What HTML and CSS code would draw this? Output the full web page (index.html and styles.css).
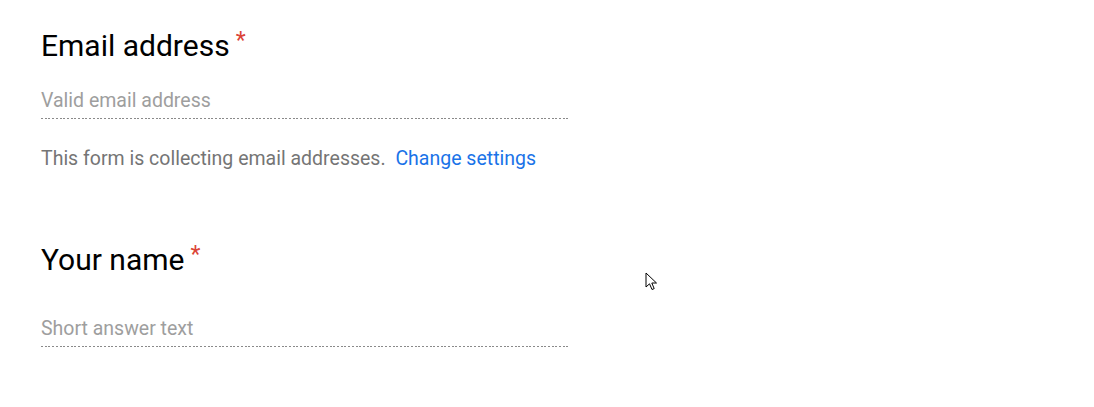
FILE: index.html
```html
<!DOCTYPE html>
<html lang="en">
<head>
    <meta charset="UTF-8">
    <title>Form questions</title>
    <link rel="stylesheet" href="styles.css">
</head>
<body>

<section class="form">
    <div class="question">
        <div class="title">Email address<span class="required">*</span></div>
        <div class="answer">Valid email address</div>
        <p class="helper">This form is collecting email addresses. <a href="#">Change settings</a></p>
    </div>

    <div class="question second">
        <div class="title">Your name<span class="required">*</span></div>
        <div class="answer">Short answer text</div>
    </div>
</section>

<svg class="cursor" width="14" height="20" viewBox="0 0 14 20">
    <path d="M1 1 L1 15 L4.5 11.8 L7 17.5 L9.2 16.6 L6.8 11 L11.5 11 Z" fill="#fff" stroke="#000" stroke-width="1" stroke-linejoin="miter"/>
</svg>

</body>
</html>
```

FILE: styles.css
```css
body {
    font-family: Roboto, Arial, sans-serif;
    background-color: #fff;
    color: #202124;
    margin: 0;
    padding: 0;
}

.form {
    padding: 28px 0 0 41px;
    width: 528px;
}

.title {
    font-size: 30px;
    line-height: 36px;
    color: #000;
}

.required {
    color: #db4437;
    font-size: 23px;
    margin-left: 6px;
    vertical-align: top;
    line-height: 26px;
}

.answer {
    margin-top: 25px;
    font-size: 19.5px;
    line-height: 24px;
    height: 24px;
    padding-bottom: 6px;
    color: #9e9e9e;
    background-image: repeating-linear-gradient(to right, #8a8a8a 0 2px, transparent 2px 3.7px);
    background-size: 100% 1px;
    background-position: left bottom;
    background-repeat: no-repeat;
}

.helper {
    margin: 28px 0 0;
    font-size: 19.5px;
    line-height: 24px;
    color: #757575;
}

.helper a {
    color: #1a73e8;
    text-decoration: none;
    margin-left: 5px;
}

.second {
    margin-top: 71px;
}

.second .answer {
    margin-top: 39px;
}

.cursor {
    position: absolute;
    left: 645px;
    top: 272px;
}
```
